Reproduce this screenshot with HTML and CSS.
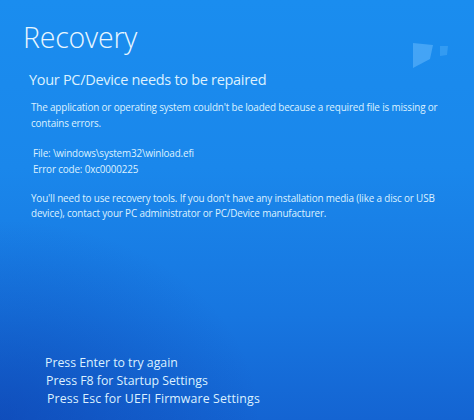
FILE: index.html
```html
<!DOCTYPE html>
<html>
<head>
<meta charset="utf-8">
<link rel="stylesheet" href="styles.css">
</head>
<body>
<div class="screen">
  <svg class="glare" width="40" height="30" viewBox="0 0 40 30"><polygon points="3,1 23,3 20,17 3,26" fill="#78c4ff" opacity="0.45"/><polygon points="30,4 38,4 37,13 30,14" fill="#78c4ff" opacity="0.28"/></svg>
  <main class="content">
    <h1 class="title">Recovery</h1>
    <h2 class="subtitle">Your PC/Device needs to be repaired</h2>
    <p class="para">The application or operating system couldn't be loaded because a required file is missing or contains errors.</p>
    <p class="para info">File: \windows\system32\winload.efi<br>Error code: 0xc0000225</p>
    <p class="para">You'll need to use recovery tools. If you don't have any installation media (like a disc or USB device), contact your PC administrator or PC/Device manufacturer.</p>
  </main>
  <ul class="keys">
    <li class="k1">Press Enter to try again</li>
    <li class="k2">Press F8 for Startup Settings</li>
    <li class="k3">Press Esc for UEFI Firmware Settings</li>
  </ul>
</div>
</body>
</html>
```
FILE: styles.css
```css
html, body {
  margin: 0;
  padding: 0;
}
body {
  width: 474px;
  height: 420px;
  overflow: hidden;
}
.screen {
  position: relative;
  width: 474px;
  height: 420px;
  box-sizing: border-box;
  display: flex;
  flex-direction: column;
  background:
    radial-gradient(ellipse 260px 200px at 0% 100%, rgba(10, 50, 160, 0.45), rgba(10, 50, 160, 0) 100%),
    linear-gradient(180deg, #1a8def 0%, #1a87eb 40%, #1776e0 75%, #1464d2 100%);
  color: #dcf1ff;
  font-family: "Open Sans", "Noto Sans", sans-serif;
}
.glare {
  position: absolute;
  left: 410px;
  top: 42px;
}
.content {
  padding: 17px 0 0 23px;
}
.title {
  margin: 0;
  font-weight: 300;
  font-size: 28.5px;
  line-height: 40px;
  letter-spacing: -0.2px;
  color: #e8f6ff;
}
.subtitle {
  margin: 13px 0 0 6px;
  font-weight: 400;
  font-size: 14.5px;
  line-height: 20px;
  letter-spacing: -0.3px;
}
.para {
  margin: 9px 0 0 8px;
  font-size: 9.9px;
  line-height: 16px;
  width: 430px;
  letter-spacing: -0.15px;
}
.info {
  margin-top: 14px;
  margin-left: 10px;
}
.para + .info + .para {
  margin-top: 14px;
  line-height: 15px;
}
.keys {
  list-style: none;
  margin: auto 0 0 45px;
  padding: 0 0 12px 0;
  font-size: 12.3px;
  line-height: 18px;
  letter-spacing: 0;
}
.k2 {
  padding-left: 1px;
}
.k3 {
  padding-left: 2px;
  letter-spacing: 0.15px;
}
```
